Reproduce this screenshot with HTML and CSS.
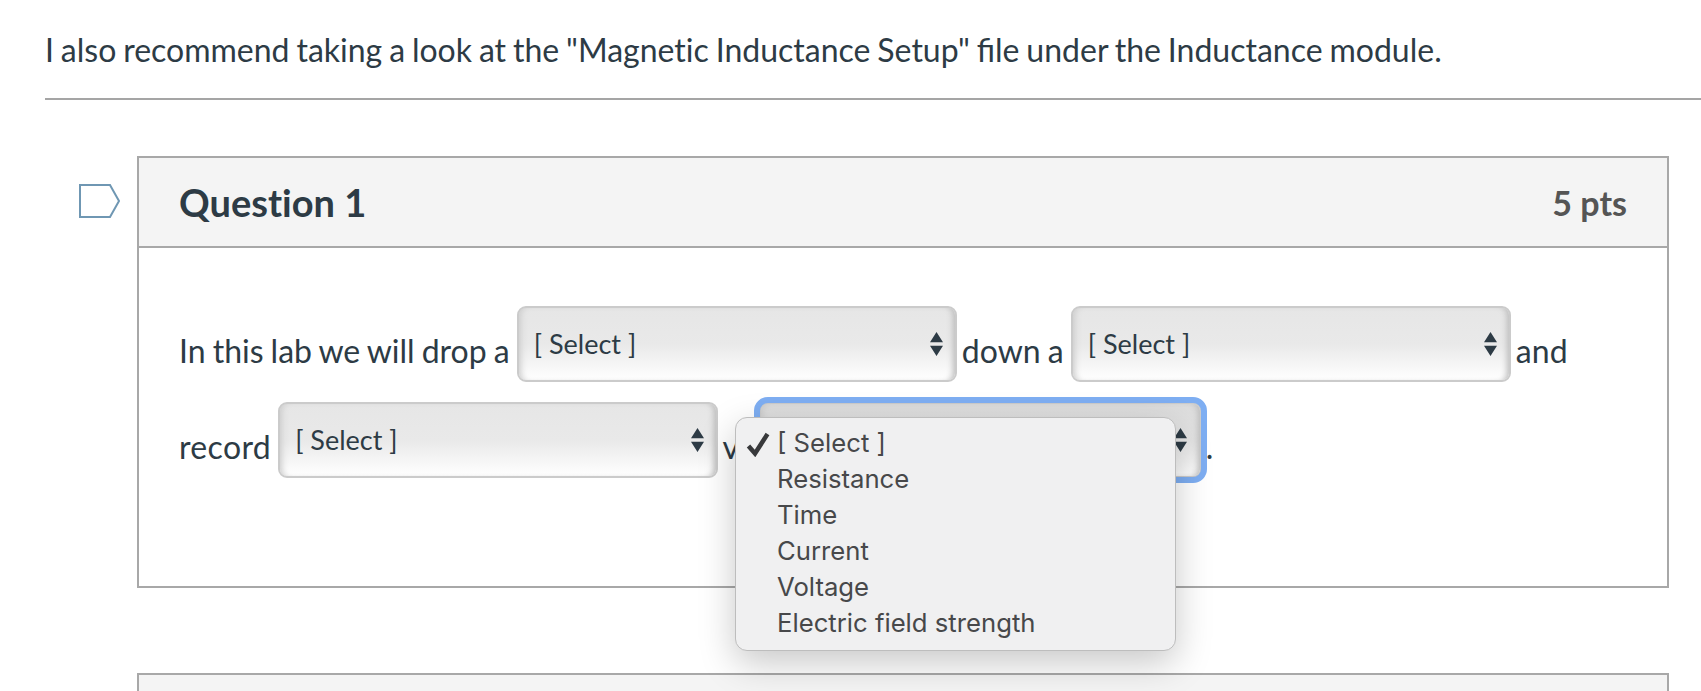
FILE: index.html
```html
<!DOCTYPE html>
<html lang="en">
<head>
<meta charset="utf-8">
<title>Question 1</title>
<link rel="stylesheet" href="styles.css">
</head>
<body>
<main class="page">
  <p class="intro">I also recommend taking a look at the "<span class="no-lig">Magnetic</span> Inductance Setup" file under the Inductance module.</p>
  <hr class="rule">
  <section class="question">
    <svg class="flag" width="42" height="34" viewBox="0 0 42 34" aria-hidden="true"><path d="M1 1H31L40 17L31 33H1Z" fill="#fff" stroke="#6f97b3" stroke-width="2"/></svg>
    <header class="q-head">
      <h2 class="q-title">Question 1</h2>
      <span class="q-pts">5 pts</span>
    </header>
    <div class="q-body">
      <div class="q-line">In this lab we will drop a
        <span class="sel"><span class="sel-text">[ Select ]</span><svg class="arrows" width="13" height="26" viewBox="0 0 14 26" aria-hidden="true"><path d="M7 0L14 11H0ZM0 15H14L7 26Z" fill="#2d3b45"/></svg></span>
        down a
        <span class="sel"><span class="sel-text">[ Select ]</span><svg class="arrows" width="13" height="26" viewBox="0 0 14 26" aria-hidden="true"><path d="M7 0L14 11H0ZM0 15H14L7 26Z" fill="#2d3b45"/></svg></span>
        and
      </div>
      <div class="q-line"><span class="wide">record</span>
        <span class="sel"><span class="sel-text">[ Select ]</span><svg class="arrows" width="13" height="26" viewBox="0 0 14 26" aria-hidden="true"><path d="M7 0L14 11H0ZM0 15H14L7 26Z" fill="#2d3b45"/></svg></span>
        vs
        <span class="sel sel-focus"><svg class="arrows" width="13" height="26" viewBox="0 0 14 26" aria-hidden="true"><path d="M7 0L14 11H0ZM0 15H14L7 26Z" fill="#2d3b45"/></svg></span><span class="dot">.</span>
      </div>
    </div>
    <ul class="menu">
      <li class="menu-item"><svg class="check" width="24" height="26" viewBox="0 0 24 26" aria-hidden="true"><path d="M2.5 15L9 22.5L21.5 3" fill="none" stroke="#38393b" stroke-width="4.5"/></svg>[ Select ]</li>
      <li class="menu-item">Resistance</li>
      <li class="menu-item">Time</li>
      <li class="menu-item">Current</li>
      <li class="menu-item">Voltage</li>
      <li class="menu-item">Electric field strength</li>
    </ul>
  </section>
  <section class="question-next"></section>
</main>
</body>
</html>
```
FILE: styles.css
```css
html, body {
  margin: 0;
  padding: 0;
  background: #fff;
  overflow: hidden;
}
.page {
  height: 691px;
  overflow: hidden;
  padding-left: 45px;
  font-family: Lato, "Open Sans", sans-serif;
  color: #2d3b45;
}
.intro {
  margin: 0;
  padding-top: 29px;
  font-size: 32px;
  line-height: 42px;
  height: 69px;
  white-space: nowrap;
  word-spacing: -1.3px;
  font-variant-ligatures: common-ligatures;
}
.no-lig {
  font-variant-ligatures: none;
}
.rule {
  margin: 0;
  border: 0;
  height: 2px;
  background: #a5a5a5;
}
.question {
  position: relative;
  box-sizing: border-box;
  margin: 56px 0 0 92px;
  width: 1532px;
  height: 432px;
  border: 2px solid #a8a8a8;
}
.flag {
  position: absolute;
  left: -60px;
  top: 26px;
}
.q-head {
  box-sizing: border-box;
  height: 90px;
  padding: 0 40px;
  display: flex;
  align-items: center;
  justify-content: space-between;
  background: #f4f4f4;
  border-bottom: 2px solid #a8a8a8;
}
.q-title {
  margin: 0;
  font-size: 38px;
  font-weight: 700;
  font-variant-ligatures: none;
}
.q-pts {
  font-size: 34px;
  font-weight: 700;
  color: #555;
}
.q-body {
  padding: 55px 40px 0;
  font-size: 32px;
  word-spacing: -1.1px;
}
.q-line {
  height: 96px;
  line-height: 96px;
  white-space: nowrap;
}
.wide {
  letter-spacing: 0.35px;
}
.sel {
  box-sizing: border-box;
  display: inline-flex;
  align-items: center;
  justify-content: space-between;
  vertical-align: middle;
  width: 440px;
  height: 76px;
  margin: -21px -2px 0 0;
  padding: 0 12px 1px 15px;
  border: 2px solid #cbcbcb;
  border-radius: 9px;
  background: linear-gradient(#e6e6e6 0, #e9e9e9 50%, #fff 100%);
  box-shadow: inset 6px 0 6px -4px #ccc, inset -6px 0 6px -4px #bbb;
  line-height: 1;
  word-spacing: 0;
}
.sel-text {
  font-size: 27px;
}
.sel-focus {
  justify-content: flex-end;
  width: 443px;
  margin-left: -1px;
  margin-right: 0;
  padding-right: 13px;
  outline: 6px solid #7eaef2;
  outline-offset: -1px;
  background: linear-gradient(#dcdcdc 0, #e4e4e4 50%, #fff 100%);
}
.dot {
  margin-left: 4px;
}
.menu {
  position: absolute;
  left: 596px;
  top: 259px;
  box-sizing: border-box;
  width: 441px;
  height: 234px;
  margin: 0;
  padding: 7px 0 0 41px;
  list-style: none;
  background: #f0f0f1;
  border: 1px solid #bdbdbd;
  border-radius: 12px;
  box-shadow: 0 12px 36px rgba(0, 0, 0, 0.22);
  font-family: Inter, Roboto, sans-serif;
  font-size: 25.7px;
  color: #47484a;
}
.menu-item {
  position: relative;
  height: 36px;
  line-height: 36px;
}
.check {
  position: absolute;
  left: -31px;
  top: 6px;
}
.question-next {
  box-sizing: border-box;
  margin: 85px 0 0 92px;
  width: 1532px;
  height: 60px;
  background: #f4f4f4;
  border: 2px solid #a8a8a8;
}
```
